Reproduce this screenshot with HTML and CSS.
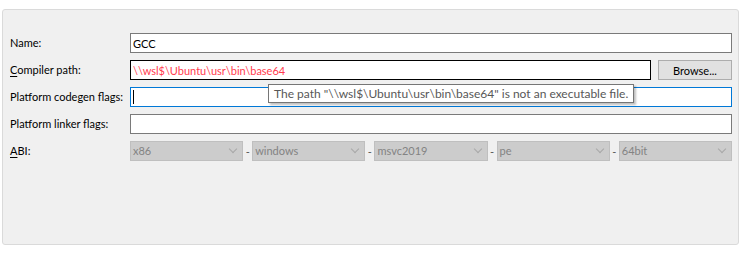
FILE: index.html
```html
<!DOCTYPE html>
<html lang="en">
  <head>
    <meta charset="UTF-8" />
    <title>Toolchain</title>
    <link rel="stylesheet" href="styles.css">
  </head>
  <body>
    <div class="panel">
      <div class="form">
        <label class="label">Name:</label>
        <div class="field"><input class="text" type="text" value="GCC" /></div>

        <label class="label"><u>C</u>ompiler path:</label>
        <div class="field row">
          <input class="text text-error" type="text" value="\\wsl$\Ubuntu\usr\bin\base64" />
          <button class="browse">Browse...</button>
        </div>

        <label class="label">Platform codegen flags:</label>
        <div class="field"><div class="text text-focus"><span class="caret"></span></div></div>

        <label class="label">Platform linker flags:</label>
        <div class="field"><input class="text" type="text" value="" /></div>

        <label class="label"><u>A</u>BI:</label>
        <div class="field abi">
          <div class="combo">x86<span class="chev"></span></div>
          <span class="dash">-</span>
          <div class="combo">windows<span class="chev"></span></div>
          <span class="dash">-</span>
          <div class="combo">msvc2019<span class="chev"></span></div>
          <span class="dash">-</span>
          <div class="combo">pe<span class="chev"></span></div>
          <span class="dash">-</span>
          <div class="combo">64bit<span class="chev"></span></div>
        </div>
      </div>

      <div class="tooltip">The path "\\wsl$\Ubuntu\usr\bin\base64" is not an executable file.</div>
    </div>
  </body>
</html>
```

FILE: styles.css
```css
body {
  margin: 0;
  background: #ffffff;
  font-family: "Lato", "Segoe UI", sans-serif;
  font-size: 11px;
  color: #000000;
}

.panel {
  position: relative;
  box-sizing: border-box;
  margin: 9px 3px 0 2px;
  height: 236px;
  padding: 23px 6px 0 7px;
  background: #f0f0f0;
  border: 1px solid #dadada;
  border-radius: 3px;
}

.form {
  display: grid;
  grid-template-columns: 120px 1fr;
  grid-template-rows: 20px 20px 20px 20px 20px;
  row-gap: 7px;
  align-items: center;
}

.label {
  line-height: 20px;
  white-space: nowrap;
}

.label u {
  text-decoration-thickness: 1px;
  text-underline-offset: 2px;
}

.field {
  display: flex;
  height: 20px;
}

.row {
  gap: 7px;
}

.text {
  box-sizing: border-box;
  flex: 1;
  min-width: 0;
  height: 20px;
  margin: 0;
  padding: 0 2px;
  border: 1px solid #7a7a7a;
  background: #ffffff;
  font-family: inherit;
  font-size: 11px;
  color: #000000;
  outline: none;
}

.text-error {
  border-color: #000000;
  color: #ff3b4e;
}

.text-focus {
  border-color: #0078d7;
  display: flex;
  align-items: center;
}

.caret {
  display: block;
  width: 1px;
  height: 14px;
  background: #000000;
}

.browse {
  box-sizing: border-box;
  width: 74px;
  height: 20px;
  margin: 0;
  padding: 0;
  background: #e1e1e1;
  border: 1px solid #adadad;
  font-family: inherit;
  font-size: 11px;
  color: #000000;
}

.abi {
  align-items: center;
}

.combo {
  position: relative;
  box-sizing: border-box;
  flex: 1;
  height: 20px;
  padding: 0 2px;
  line-height: 18px;
  background: #cccccc;
  border: 1px solid #bfbfbf;
  color: #838383;
}

.chev {
  position: absolute;
  right: 6px;
  top: 4px;
  width: 5px;
  height: 5px;
  border-right: 1px solid #a8a8a8;
  border-bottom: 1px solid #a8a8a8;
  transform: rotate(45deg);
}

.dash {
  width: 9px;
  text-align: center;
  color: #555555;
}

.tooltip {
  position: absolute;
  left: 265px;
  top: 74px;
  box-sizing: border-box;
  height: 19px;
  padding: 0 5px;
  line-height: 17px;
  white-space: nowrap;
  font-size: 12px;
  background: #ffffff;
  border: 1px solid #767676;
  color: #575757;
  box-shadow: 2px 2px 2px rgba(0, 0, 0, 0.25);
}
```
